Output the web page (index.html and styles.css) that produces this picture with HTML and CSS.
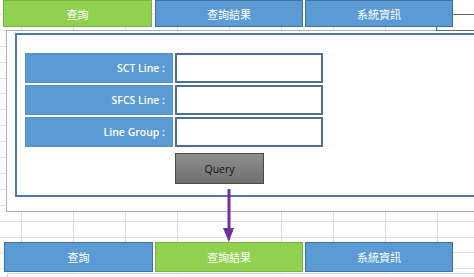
FILE: index.html
```html
<!DOCTYPE html>
<html lang="zh-Hant">
<head>
<meta charset="utf-8">
<title>查詢</title>
<link rel="stylesheet" href="styles.css">
</head>
<body>
<div class="sheet">
  <div class="tabs tabs-top">
    <div class="tab tab-green tab-w1">查詢</div>
    <div class="tab tab-blue tab-w2 gap3">查詢結果</div>
    <div class="tab tab-blue tab-w2 gap2">系統資訊</div>
    <div class="link-line"></div>
  </div>

  <div class="frame-outer">
    <div class="frame-inner">
      <div class="form">
        <div class="label">SCT Line :</div>
        <div class="input"></div>
        <div class="label">SFCS Line :</div>
        <div class="input"></div>
        <div class="label">Line Group :</div>
        <div class="input"></div>
      </div>
      <div class="query">Query</div>
    </div>
  </div>

  <div class="tabs tabs-bottom">
    <div class="tab tab-blue tab-w1">查詢</div>
    <div class="tab tab-green tab-w2 gap2">查詢結果</div>
    <div class="tab tab-blue tab-w2 gap2">系統資訊</div>
  </div>
  <div class="frame-next"></div>

  <div class="conn conn-b"></div>
  <div class="conn conn-c"></div>

  <svg class="arrow" width="14" height="56" viewBox="0 0 14 56">
    <rect x="5.5" y="1" width="3" height="41" fill="#7030a0"/>
    <polygon points="1,40 12,40 6.8,54" fill="#7030a0"/>
  </svg>
</div>
</body>
</html>
```

FILE: styles.css
```css
html, body {
  margin: 0;
  padding: 0;
}

body {
  width: 474px;
  height: 277px;
  overflow: hidden;
  font-family: "Open Sans", "Liberation Sans", "Noto Sans CJK TC", sans-serif;
  background-color: #ffffff;
  background-image:
    repeating-linear-gradient(to right, transparent 0, transparent 21px, #dcdcdc 21px, #dcdcdc 22px, transparent 22px, transparent 52px),
    repeating-linear-gradient(to bottom, transparent 0, transparent 14px, #e2e2e2 14px, #e2e2e2 15px, transparent 15px, transparent 15.9px);
}

.sheet {
  position: relative;
  width: 474px;
  height: 277px;
}

.tabs {
  display: flex;
  align-items: stretch;
}

.tabs-top {
  height: 27px;
  margin-left: 3px;
}

.tabs-bottom {
  height: 30px;
  margin-top: 30px;
  margin-left: 4px;
}

.tab {
  box-sizing: border-box;
  flex: none;
  display: flex;
  align-items: center;
  justify-content: center;
  color: #ffffff;
  font-family: "Noto Sans CJK TC", sans-serif;
  font-size: 11px;
}

.tab-w1 { width: 149px; }
.tab-w2 { width: 148px; }
.gap3 { margin-left: 3px; }
.gap2 { margin-left: 2px; }

.tab-green {
  background: #92d050;
  border: 1px solid #7fae48;
}

.tab-blue {
  background: #5b9bd5;
  border: 1px solid #41719c;
}

.link-line {
  flex: 1;
  align-self: center;
  height: 1px;
  margin-top: 1px;
  background: #4f7464;
}

.frame-outer {
  box-sizing: border-box;
  margin: 3px 0 0 6px;
  height: 182px;
  border-style: solid;
  border-color: #a3b1c6;
  border-width: 1px 0 1px 1px;
  background: #ffffff;
  padding-top: 2px;
  padding-left: 8px;
}

.frame-inner {
  box-sizing: border-box;
  height: 164px;
  border-style: solid;
  border-color: #5078ae;
  border-width: 2px 0 2px 2px;
  padding-top: 18px;
  padding-left: 8px;
}

.form {
  display: grid;
  grid-template-columns: 148px 148px;
  grid-auto-rows: 30px;
  column-gap: 2px;
  row-gap: 2px;
}

.label {
  box-sizing: border-box;
  background: #5b9bd5;
  border: 1px solid #5290cb;
  color: #ffffff;
  font-size: 10.5px;
  font-weight: 600;
  display: flex;
  align-items: center;
  justify-content: flex-end;
  padding-right: 7px;
}

.input {
  box-sizing: border-box;
  background: #ffffff;
  border: 2px solid #4d6d94;
}

.query {
  box-sizing: border-box;
  margin-top: 6px;
  margin-left: 150px;
  width: 89px;
  height: 31px;
  background: linear-gradient(to bottom, #8f8f8f, #6f6f6f);
  border: 1px solid #4a4a4a;
  color: #111111;
  font-size: 10.5px;
  display: flex;
  align-items: center;
  justify-content: center;
}

.frame-next {
  margin: 1px 0 0 7px;
  height: 4px;
  border-top: 1px solid #c9d6e8;
  border-left: 1px solid #c9d6e8;
  background: #ffffff;
}

.conn {
  position: absolute;
  background: #4f7464;
}

.conn-b {
  left: 436px;
  top: 27px;
  width: 1px;
  height: 4px;
}

.conn-c {
  left: 436px;
  top: 30px;
  width: 38px;
  height: 1px;
}

.arrow {
  position: absolute;
  left: 222px;
  top: 188px;
}
```
